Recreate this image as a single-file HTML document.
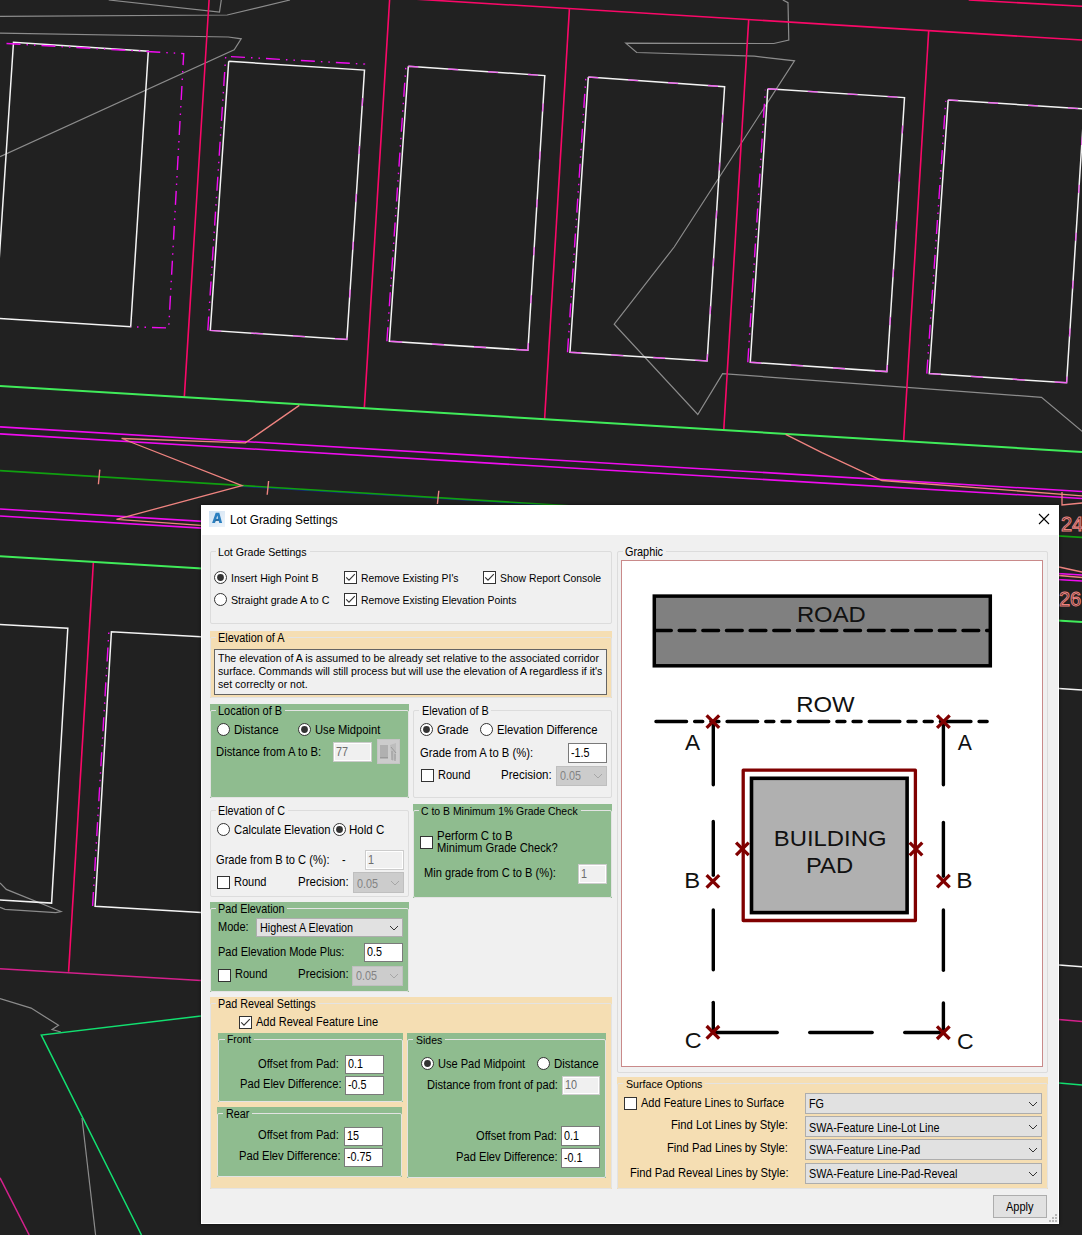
<!DOCTYPE html>
<html><head><meta charset="utf-8"><style>
html,body{margin:0;padding:0;}
body{width:1082px;height:1235px;overflow:hidden;position:relative;background:#212121;font-family:"Liberation Sans",sans-serif;}
.t{position:absolute;white-space:nowrap;}
.r{position:absolute;}
</style></head><body>
<svg class="r" style="left:0;top:0;z-index:0" width="1082" height="1235"><path d="M108.7 0 L219.5 12.2 L221.3 0" stroke="#8c8c8c" stroke-width="1.2" fill="none" /><path d="M0 16.3 L227.2 15 L290 0" stroke="#8c8c8c" stroke-width="1.2" fill="none" /><path d="M0 33.1 L228.3 37 L241.2 38.8 L234.2 49.7 L0 156.6" stroke="#8c8c8c" stroke-width="1.2" fill="none" /><path d="M782.8 0 L788 2.6 L788.8 40.1 L773.8 43.5 L625.8 43.2 L636.7 52.5 L754.3 56.2 L794.5 60.8 L674.2 247 L614.2 324.2 L697.8 414.5 L722.6 373.6 L1041.5 397.3 L1090 438" stroke="#8c8c8c" stroke-width="1.2" fill="none" /><path d="M0 883 L6.3 889.4 L61 911.5 L55.8 912.6 L5 909.4 L0 907.3" stroke="#8c8c8c" stroke-width="1.2" fill="none" /><path d="M0 998.5 L31.1 1008.1 L58.5 1025.3 L52.1 1029.6 L60.9 1032" stroke="#8c8c8c" stroke-width="1.2" fill="none" /><path d="M82 1118 L95.6 1235" stroke="#8c8c8c" stroke-width="1.2" fill="none" /><path d="M-4.7 318.2 L13.5 42.2 L148.3 51.2 L130.7 326.8 L-4.7 318.2" stroke="#f4f4f4" stroke-width="1.5" fill="none" /><path d="M228.7 61.3 L364.5 70.1 L346.9 339.4 L210.3 330.4 L228.7 61.3" stroke="#f4f4f4" stroke-width="1.5" fill="none" /><path d="M408.3 66.3 L544.8 75.6 L527.9 350.3 L389.4 341.2 L408.3 66.3" stroke="#f4f4f4" stroke-width="1.5" fill="none" /><path d="M588.3 77.1 L724.6 86.7 L707.1 360.9 L570 352.3 L588.3 77.1" stroke="#f4f4f4" stroke-width="1.5" fill="none" /><path d="M767.8 88.8 L904.5 97.6 L886.9 371.6 L750.3 362.2 L767.8 88.8" stroke="#f4f4f4" stroke-width="1.5" fill="none" /><path d="M948.2 99.9 L1084 109 L1066.6 382.8 L929.3 373.6 L948.2 99.9" stroke="#f4f4f4" stroke-width="1.5" fill="none" /><path d="M-4 624.3 L67.8 628.3 L51.6 903.1 L-4 899.7" stroke="#f4f4f4" stroke-width="1.5" fill="none" /><path d="M201 636.8 L111.4 631.7 L95.1 906.3 L201 912.6" stroke="#f4f4f4" stroke-width="1.5" fill="none" /><path d="M6.5 43.5 L183.7 53.6 L168.7 328 L130.7 326.8" stroke="#f00cf0" stroke-width="1.4" fill="none" stroke-dasharray="14 6 1.5 6 1.5 6"/><path d="M207.8 330.4 L225.7 56.3 L364.5 64.1 L364.5 70.1" stroke="#f00cf0" stroke-width="1.4" fill="none" stroke-dasharray="14 6 1.5 6 1.5 6"/><path d="M364.5 70.1 L346.9 339.4" stroke="#f00cf0" stroke-width="1.4" fill="none" stroke-dasharray="8 40" stroke-dashoffset="20" stroke-opacity="0.6"/><path d="M346.9 339.4 L210.3 330.4" stroke="#f00cf0" stroke-width="1.4" fill="none" stroke-dasharray="12 30" stroke-opacity="0.6"/><path d="M386.9 341.2 L405.8 67.3" stroke="#f00cf0" stroke-width="1.4" fill="none" stroke-dasharray="14 6 1.5 6 1.5 6"/><path d="M408.3 66.3 L544.8 75.6" stroke="#f00cf0" stroke-width="1.4" fill="none" stroke-dasharray="10 30" stroke-opacity="0.6"/><path d="M544.8 75.6 L527.9 350.3" stroke="#f00cf0" stroke-width="1.4" fill="none" stroke-dasharray="8 40" stroke-dashoffset="20" stroke-opacity="0.6"/><path d="M527.9 350.3 L389.4 341.2" stroke="#f00cf0" stroke-width="1.4" fill="none" stroke-dasharray="12 30" stroke-opacity="0.6"/><path d="M567.5 352.3 L585.8 78.1" stroke="#f00cf0" stroke-width="1.4" fill="none" stroke-dasharray="14 6 1.5 6 1.5 6"/><path d="M588.3 77.1 L724.6 86.7" stroke="#f00cf0" stroke-width="1.4" fill="none" stroke-dasharray="10 30" stroke-opacity="0.6"/><path d="M724.6 86.7 L707.1 360.9" stroke="#f00cf0" stroke-width="1.4" fill="none" stroke-dasharray="8 40" stroke-dashoffset="20" stroke-opacity="0.6"/><path d="M707.1 360.9 L570 352.3" stroke="#f00cf0" stroke-width="1.4" fill="none" stroke-dasharray="12 30" stroke-opacity="0.6"/><path d="M747.8 362.2 L765.3 89.8" stroke="#f00cf0" stroke-width="1.4" fill="none" stroke-dasharray="14 6 1.5 6 1.5 6"/><path d="M767.8 88.8 L904.5 97.6" stroke="#f00cf0" stroke-width="1.4" fill="none" stroke-dasharray="10 30" stroke-opacity="0.6"/><path d="M904.5 97.6 L886.9 371.6" stroke="#f00cf0" stroke-width="1.4" fill="none" stroke-dasharray="8 40" stroke-dashoffset="20" stroke-opacity="0.6"/><path d="M886.9 371.6 L750.3 362.2" stroke="#f00cf0" stroke-width="1.4" fill="none" stroke-dasharray="12 30" stroke-opacity="0.6"/><path d="M926.8 373.6 L945.7 100.9" stroke="#f00cf0" stroke-width="1.4" fill="none" stroke-dasharray="14 6 1.5 6 1.5 6"/><path d="M948.2 99.9 L1084 109" stroke="#f00cf0" stroke-width="1.4" fill="none" stroke-dasharray="10 30" stroke-opacity="0.6"/><path d="M1084 109 L1066.6 382.8" stroke="#f00cf0" stroke-width="1.4" fill="none" stroke-dasharray="8 40" stroke-dashoffset="20" stroke-opacity="0.6"/><path d="M1066.6 382.8 L929.3 373.6" stroke="#f00cf0" stroke-width="1.4" fill="none" stroke-dasharray="12 30" stroke-opacity="0.6"/><path d="M92.6 906 L108.9 631" stroke="#f00cf0" stroke-width="1.4" fill="none" stroke-dasharray="14 6 1.5 6 1.5 6"/><path d="M209.1 0 L184.3 397.1" stroke="#fa0868" stroke-width="1.6" fill="none" /><path d="M389.6 0 L364.3 408.5" stroke="#fa0868" stroke-width="1.6" fill="none" /><path d="M405 -1.5 L1082 40" stroke="#fa0868" stroke-width="1.6" fill="none" /><path d="M569.4 9.1 L544.6 419.1" stroke="#fa0868" stroke-width="1.6" fill="none" /><path d="M748.7 19.4 L723.7 430.8" stroke="#fa0868" stroke-width="1.6" fill="none" /><path d="M928.7 30.8 L903.6 441.4" stroke="#fa0868" stroke-width="1.6" fill="none" /><path d="M968.7 0 L1082 6.2" stroke="#fa0868" stroke-width="1.6" fill="none" /><path d="M93.4 562 L68.6 971.8" stroke="#fa0868" stroke-width="1.6" fill="none" /><path d="M0 968.7 L201 980.6" stroke="#d4208c" stroke-width="1.5" fill="none" /><path d="M0 386 L1082 452" stroke="#40ec5a" stroke-width="2" fill="none" /><path d="M0 556.3 L1082 622" stroke="#40ec5a" stroke-width="2" fill="none" /><path d="M242 486.5 L560 505.9" stroke="#102890" stroke-width="1.0" fill="none" /><path d="M0 470.6 L1082 537.4" stroke="#10a010" stroke-width="1.6" fill="none" /><path d="M0 426.9 L1082 491.5" stroke="#f00cf0" stroke-width="1.6" fill="none" /><path d="M0 433.9 L1082 498.5" stroke="#f00cf0" stroke-width="1.6" fill="none" /><path d="M0 509 L1082 575" stroke="#f00cf0" stroke-width="1.6" fill="none" /><path d="M0 516 L1082 581" stroke="#f00cf0" stroke-width="1.6" fill="none" /><path d="M299.3 405.4 L245.3 442.9 L121.6 438.5 L242 485.6 L116.5 519.4 L201 525.4" stroke="#f08480" stroke-width="1.3" fill="none" /><path d="M785.6 434.4 L821.9 452.6 L881.9 480.5 L1082 495.8" stroke="#f08480" stroke-width="1.3" fill="none" /><path d="M99.8 469.6 L98.39999999999999 484.3" stroke="#f08480" stroke-width="1.4" fill="none" /><path d="M268.59999999999997 481 L267.2 494.7" stroke="#f08480" stroke-width="1.4" fill="none" /><path d="M438.8 490.8 L437.40000000000003 504" stroke="#f08480" stroke-width="1.4" fill="none" /><path d="M201 1016 L41.3 1035.1 L141.5 1235" stroke="#12e070" stroke-width="1.5" fill="none" /><path d="M0 1177.8 L29.2 1235" stroke="#d4208c" stroke-width="1.5" fill="none" /><path d="M1059 688.5 L1082 690" stroke="#f4f4f4" stroke-width="1.5" fill="none" /><path d="M1059 965 L1082 966.8" stroke="#f4f4f4" stroke-width="1.5" fill="none" /><path d="M1059 1019.5 L1082 1021.5" stroke="#d4208c" stroke-width="1.5" fill="none" /><path d="M1059 1083 L1082 1085" stroke="#12e070" stroke-width="1.5" fill="none" /><path d="M1059 567 L1082 572" stroke="#f08480" stroke-width="1.3" fill="none" /><path d="M1059 575.5 L1082 577.5" stroke="#f08480" stroke-width="1.3" fill="none" /><path d="M1062 492 L1062 505 L1082 503" stroke="#f08480" stroke-width="1.3" fill="none" /><text x="1061" y="530.5" font-family="Liberation Sans" font-size="20" fill="none" stroke="#f08480" stroke-width="1">24</text><text x="1059" y="605.5" font-family="Liberation Sans" font-size="20" fill="none" stroke="#f08480" stroke-width="1">26</text></svg>
<div class="r" style="left:201px;top:505px;width:858px;height:719px;background:#fff;box-shadow:0 0 3px rgba(0,0,0,0.6);z-index:0"></div>
<div class="r" style="left:202px;top:535px;width:856px;height:688px;background:#f0f0f0;z-index:0"></div>
<svg class="r" style="left:209px;top:511px;z-index:2" width="16" height="16"><defs><linearGradient id="ig" x1="0" y1="0" x2="1" y2="1"><stop offset="0" stop-color="#cfe2f3"/><stop offset="1" stop-color="#eef4fa"/></linearGradient></defs><rect width="16" height="16" fill="url(#ig)"/><g transform="translate(0.9 0.2)"><path d="M2.2 11.8 L5.8 1.6 L9.4 1.6 L12.2 11.8 L9.4 11.8 L8.8 9.6 L5.8 9.6 L5 11.8 Z M6.3 7.6 L8.2 7.6 L7.5 4.4 Z" fill="#2a7fc0"/><path d="M5 11.8 L5.8 9.6 L8.8 9.6 L9.2 8.4 L5.6 8.6 Z" fill="#1d4f78" opacity="0.8"/></g></svg>
<div class="t" style="left:230px;top:512.00px;font-size:11.822px;line-height:16px;color:#000;z-index:2;transform:scaleY(1.033);transform-origin:0 12px">Lot Grading Settings</div>
<svg class="r" style="left:1038px;top:513px;z-index:2" width="12" height="12"><path d="M1 1 L11 11 M11 1 L1 11" stroke="#000" stroke-width="1.1"/></svg>
<div class="r" style="left:210px;top:551px;width:402px;height:73px;border:1px solid #dcdcdc;box-sizing:border-box;border-radius:2px;z-index:1"></div>
<div class="r" style="left:216.3px;top:551px;width:93.4px;height:1px;background:#f0f0f0;z-index:1"></div>
<div class="t" style="left:218px;top:544.00px;font-size:10.633px;line-height:16px;color:#000;z-index:2;transform:scaleY(1.053);transform-origin:0 12px">Lot Grade Settings</div>
<svg class="r" style="left:214px;top:571px;z-index:4" width="13" height="13"><circle cx="6.5" cy="6.5" r="6" fill="#fff" stroke="#333" stroke-width="1"/><circle cx="6.5" cy="6.5" r="3.4" fill="#333"/></svg>
<div class="t" style="left:231px;top:571.00px;font-size:10.497px;line-height:16px;color:#000;z-index:5;transform:scaleY(1.066);transform-origin:0 11px">Insert High Point B</div>
<svg class="r" style="left:214px;top:593px;z-index:4" width="13" height="13"><circle cx="6.5" cy="6.5" r="6" fill="#fff" stroke="#333" stroke-width="1"/></svg>
<div class="t" style="left:231px;top:592.00px;font-size:10.662px;line-height:16px;color:#000;z-index:5;transform:scaleY(1.050);transform-origin:0 12px">Straight grade A to C</div>
<svg class="r" style="left:344px;top:571px;z-index:4" width="13" height="13"><rect x="0.5" y="0.5" width="12" height="12" fill="#fff" stroke="#333" stroke-width="1"/><path d="M2.2 6.4 L5 9.2 L10.8 3.2" fill="none" stroke="#333" stroke-width="1.1"/></svg>
<div class="t" style="left:361px;top:571.00px;font-size:10.366px;line-height:16px;color:#000;z-index:5;transform:scaleY(1.080);transform-origin:0 11px">Remove Existing PI's</div>
<svg class="r" style="left:344px;top:593px;z-index:4" width="13" height="13"><rect x="0.5" y="0.5" width="12" height="12" fill="#fff" stroke="#333" stroke-width="1"/><path d="M2.2 6.4 L5 9.2 L10.8 3.2" fill="none" stroke="#333" stroke-width="1.1"/></svg>
<div class="t" style="left:361px;top:593.00px;font-size:10.408px;line-height:16px;color:#000;z-index:5;transform:scaleY(1.075);transform-origin:0 11px">Remove Existing Elevation Points</div>
<svg class="r" style="left:483px;top:571px;z-index:4" width="13" height="13"><rect x="0.5" y="0.5" width="12" height="12" fill="#fff" stroke="#333" stroke-width="1"/><path d="M2.2 6.4 L5 9.2 L10.8 3.2" fill="none" stroke="#333" stroke-width="1.1"/></svg>
<div class="t" style="left:500px;top:571.00px;font-size:10.405px;line-height:16px;color:#000;z-index:5;transform:scaleY(1.076);transform-origin:0 11px">Show Report Console</div>
<div class="r" style="left:210px;top:631px;width:402px;height:67px;background:#f5deb3;z-index:1"></div>
<div class="r" style="left:210px;top:637px;width:402px;height:61px;border:1px solid #e3e3e3;box-sizing:border-box;border-radius:2px;z-index:1"></div>
<div class="r" style="left:216.3px;top:637px;width:71.7px;height:1px;background:#f5deb3;z-index:1"></div>
<div class="t" style="left:218px;top:630.00px;font-size:10.896px;line-height:16px;color:#000;z-index:2;transform:scaleY(1.121);transform-origin:0 12px">Elevation of A</div>
<div class="r" style="left:214px;top:649px;width:393px;height:46px;background:#f0f0f0;border:1px solid #646464;box-sizing:border-box;z-index:3"></div>
<div class="t" style="left:218px;top:650.00px;font-size:10.605px;line-height:16px;color:#000;z-index:4;transform:scaleY(1.055);transform-origin:0 12px">The elevation of A is assumed to be already set relative to the associated corridor</div>
<div class="t" style="left:218px;top:663.00px;font-size:10.550px;line-height:16px;color:#000;z-index:4;transform:scaleY(1.061);transform-origin:0 12px">surface. Commands will still process but will use the elevation of A regardless if it's</div>
<div class="t" style="left:218px;top:676.00px;font-size:10.550px;line-height:16px;color:#000;z-index:4;transform:scaleY(1.061);transform-origin:0 12px">set correclty or not.</div>
<div class="r" style="left:210px;top:704px;width:199px;height:94px;background:#8fbc8f;z-index:1"></div>
<div class="r" style="left:210px;top:710px;width:199px;height:88px;border:1px solid #e3e3e3;box-sizing:border-box;border-radius:2px;z-index:1"></div>
<div class="r" style="left:216.3px;top:710px;width:68.7px;height:1px;background:#8fbc8f;z-index:1"></div>
<div class="t" style="left:218px;top:703.00px;font-size:10.995px;line-height:16px;color:#000;z-index:2;transform:scaleY(1.110);transform-origin:0 12px">Location of B</div>
<svg class="r" style="left:217px;top:723px;z-index:4" width="13" height="13"><circle cx="6.5" cy="6.5" r="6" fill="#fff" stroke="#333" stroke-width="1"/></svg>
<div class="t" style="left:234px;top:722.00px;font-size:11.501px;line-height:16px;color:#000;z-index:5;transform:scaleY(1.062);transform-origin:0 12px">Distance</div>
<svg class="r" style="left:298px;top:723px;z-index:4" width="13" height="13"><circle cx="6.5" cy="6.5" r="6" fill="#fff" stroke="#333" stroke-width="1"/><circle cx="6.5" cy="6.5" r="3.4" fill="#333"/></svg>
<div class="t" style="left:315px;top:722.00px;font-size:11.217px;line-height:16px;color:#000;z-index:5;transform:scaleY(1.088);transform-origin:0 12px">Use Midpoint</div>
<div class="t" style="left:216px;top:744.00px;font-size:11.271px;line-height:16px;color:#000;z-index:5;transform:scaleY(1.083);transform-origin:0 12px">Distance from A to B:</div>
<div class="r" style="left:333px;top:742px;width:39px;height:20px;background:#f0f0f0;border:1px solid #ccc;box-shadow:inset 0 0 0 1px #fff;box-sizing:border-box;z-index:4"></div>
<div class="t" style="left:336px;top:744.00px;font-size:10.800px;line-height:16px;color:#6d6d6d;z-index:5;transform:scaleY(1.130);transform-origin:0 12px">77</div>
<div class="r" style="left:377px;top:739px;width:23px;height:25px;background:#cccccc;border:1px solid #c4c4c4;box-sizing:border-box;z-index:4"></div>
<svg class="r" style="left:377px;top:739px;z-index:5" width="23" height="25"><rect x="3" y="6" width="8" height="13" fill="#b0b0b0"/><rect x="3" y="18" width="8" height="1.5" fill="#9a9a9a"/><path d="M13 6 L19 4 L19 20 L15 22 Z" fill="#bdbdbd"/><path d="M14 8 L19 14 M15 12 L15 21 M18 15 L18 22" stroke="#9a9a9a" stroke-width="1"/></svg>
<div class="r" style="left:413px;top:710px;width:199px;height:88px;border:1px solid #dcdcdc;box-sizing:border-box;border-radius:2px;z-index:1"></div>
<div class="r" style="left:419.4px;top:710px;width:71.4px;height:1px;background:#f0f0f0;z-index:1"></div>
<div class="t" style="left:422px;top:703.00px;font-size:10.837px;line-height:16px;color:#000;z-index:2;transform:scaleY(1.127);transform-origin:0 12px">Elevation of B</div>
<svg class="r" style="left:420px;top:723px;z-index:4" width="13" height="13"><circle cx="6.5" cy="6.5" r="6" fill="#fff" stroke="#333" stroke-width="1"/><circle cx="6.5" cy="6.5" r="3.4" fill="#333"/></svg>
<div class="t" style="left:437px;top:722.00px;font-size:11.359px;line-height:16px;color:#000;z-index:5;transform:scaleY(1.075);transform-origin:0 12px">Grade</div>
<svg class="r" style="left:480px;top:723px;z-index:4" width="13" height="13"><circle cx="6.5" cy="6.5" r="6" fill="#fff" stroke="#333" stroke-width="1"/></svg>
<div class="t" style="left:497px;top:722.00px;font-size:11.266px;line-height:16px;color:#000;z-index:5;transform:scaleY(1.084);transform-origin:0 12px">Elevation Difference</div>
<div class="t" style="left:420px;top:745.00px;font-size:11.240px;line-height:16px;color:#000;z-index:5;transform:scaleY(1.086);transform-origin:0 12px">Grade from A to B (%):</div>
<div class="r" style="left:568px;top:743px;width:39px;height:20px;background:#fff;border:1px solid #7a7a7a;box-sizing:border-box;z-index:4"></div>
<div class="t" style="left:571px;top:745.00px;font-size:10.800px;line-height:16px;color:#000;z-index:5;transform:scaleY(1.130);transform-origin:0 12px">-1.5</div>
<svg class="r" style="left:421px;top:769px;z-index:4" width="13" height="13"><rect x="0.5" y="0.5" width="12" height="12" fill="#fff" stroke="#333" stroke-width="1"/></svg>
<div class="t" style="left:438px;top:767.00px;font-size:11.036px;line-height:16px;color:#000;z-index:5;transform:scaleY(1.106);transform-origin:0 12px">Round</div>
<div class="t" style="left:501px;top:767.00px;font-size:11.571px;line-height:16px;color:#000;z-index:5;transform:scaleY(1.055);transform-origin:0 12px">Precision:</div>
<div class="r" style="left:556px;top:766px;width:51px;height:20px;background:#cccccc;border:1px solid #bfbfbf;box-sizing:border-box;z-index:4"></div>
<div class="t" style="left:560px;top:768.00px;font-size:10.800px;line-height:16px;color:#838383;z-index:5;transform:scaleY(1.130);transform-origin:0 12px">0.05</div>
<svg class="r" style="left:592.5px;top:772.0px;z-index:5" width="10" height="8"><path d="M1 2 L5 6 L9 2" fill="none" stroke="#a6a6a6" stroke-width="1"/></svg>
<div class="r" style="left:210px;top:810px;width:199px;height:87px;border:1px solid #dcdcdc;box-sizing:border-box;border-radius:2px;z-index:1"></div>
<div class="r" style="left:216.3px;top:810px;width:71.7px;height:1px;background:#f0f0f0;z-index:1"></div>
<div class="t" style="left:218px;top:803.00px;font-size:10.762px;line-height:16px;color:#000;z-index:2;transform:scaleY(1.135);transform-origin:0 12px">Elevation of C</div>
<svg class="r" style="left:217px;top:823px;z-index:4" width="13" height="13"><circle cx="6.5" cy="6.5" r="6" fill="#fff" stroke="#333" stroke-width="1"/></svg>
<div class="t" style="left:234px;top:822.00px;font-size:11.281px;line-height:16px;color:#000;z-index:5;transform:scaleY(1.082);transform-origin:0 12px">Calculate Elevation</div>
<svg class="r" style="left:333px;top:823px;z-index:4" width="13" height="13"><circle cx="6.5" cy="6.5" r="6" fill="#fff" stroke="#333" stroke-width="1"/><circle cx="6.5" cy="6.5" r="3.4" fill="#333"/></svg>
<div class="t" style="left:349px;top:822.00px;font-size:11.574px;line-height:16px;color:#000;z-index:5;transform:scaleY(1.055);transform-origin:0 12px">Hold C</div>
<div class="t" style="left:216px;top:852.00px;font-size:11.125px;line-height:16px;color:#000;z-index:5;transform:scaleY(1.097);transform-origin:0 12px">Grade from B to C (%):</div>
<div class="t" style="left:342px;top:852.00px;font-size:10.800px;line-height:16px;color:#000;z-index:5;transform:scaleY(1.130);transform-origin:0 12px">-</div>
<div class="r" style="left:365px;top:850px;width:39px;height:20px;background:#f0f0f0;border:1px solid #ccc;box-shadow:inset 0 0 0 1px #fff;box-sizing:border-box;z-index:4"></div>
<div class="t" style="left:368px;top:852.00px;font-size:10.800px;line-height:16px;color:#6d6d6d;z-index:5;transform:scaleY(1.130);transform-origin:0 12px">1</div>
<svg class="r" style="left:217px;top:876px;z-index:4" width="13" height="13"><rect x="0.5" y="0.5" width="12" height="12" fill="#fff" stroke="#333" stroke-width="1"/></svg>
<div class="t" style="left:234px;top:874.00px;font-size:11.036px;line-height:16px;color:#000;z-index:5;transform:scaleY(1.106);transform-origin:0 12px">Round</div>
<div class="t" style="left:298px;top:874.00px;font-size:11.571px;line-height:16px;color:#000;z-index:5;transform:scaleY(1.055);transform-origin:0 12px">Precision:</div>
<div class="r" style="left:353px;top:872px;width:51px;height:21px;background:#cccccc;border:1px solid #bfbfbf;box-sizing:border-box;z-index:4"></div>
<div class="t" style="left:357px;top:876.00px;font-size:10.800px;line-height:16px;color:#838383;z-index:5;transform:scaleY(1.130);transform-origin:0 12px">0.05</div>
<svg class="r" style="left:389.5px;top:878.5px;z-index:5" width="10" height="8"><path d="M1 2 L5 6 L9 2" fill="none" stroke="#a6a6a6" stroke-width="1"/></svg>
<div class="r" style="left:413px;top:804px;width:199px;height:94px;background:#8fbc8f;z-index:1"></div>
<div class="r" style="left:413px;top:810px;width:199px;height:88px;border:1px solid #e3e3e3;box-sizing:border-box;border-radius:2px;z-index:1"></div>
<div class="r" style="left:418.8px;top:810px;width:162.2px;height:1px;background:#8fbc8f;z-index:1"></div>
<div class="t" style="left:421px;top:804.00px;font-size:10.445px;line-height:16px;color:#000;z-index:2;transform:scaleY(1.072);transform-origin:0 11px">C to B Minimum 1% Grade Check</div>
<svg class="r" style="left:420px;top:836px;z-index:4" width="13" height="13"><rect x="0.5" y="0.5" width="12" height="12" fill="#fff" stroke="#333" stroke-width="1"/></svg>
<div class="t" style="left:437px;top:828.00px;font-size:11.455px;line-height:16px;color:#000;z-index:5;transform:scaleY(1.066);transform-origin:0 12px">Perform C to B</div>
<div class="t" style="left:437px;top:840.00px;font-size:11.198px;line-height:16px;color:#000;z-index:5;transform:scaleY(1.090);transform-origin:0 12px">Minimum Grade Check?</div>
<div class="t" style="left:424px;top:865.00px;font-size:11.101px;line-height:16px;color:#000;z-index:5;transform:scaleY(1.100);transform-origin:0 12px">Min grade from C to B (%):</div>
<div class="r" style="left:578px;top:864px;width:29px;height:20px;background:#f0f0f0;border:1px solid #ccc;box-shadow:inset 0 0 0 1px #fff;box-sizing:border-box;z-index:4"></div>
<div class="t" style="left:581px;top:866.00px;font-size:10.800px;line-height:16px;color:#6d6d6d;z-index:5;transform:scaleY(1.130);transform-origin:0 12px">1</div>
<div class="r" style="left:210px;top:902px;width:199px;height:90px;background:#8fbc8f;z-index:1"></div>
<div class="r" style="left:210px;top:908px;width:199px;height:84px;border:1px solid #e3e3e3;box-sizing:border-box;border-radius:2px;z-index:1"></div>
<div class="r" style="left:216.3px;top:908px;width:71.1px;height:1px;background:#8fbc8f;z-index:1"></div>
<div class="t" style="left:218px;top:901.00px;font-size:10.805px;line-height:16px;color:#000;z-index:2;transform:scaleY(1.130);transform-origin:0 12px">Pad Elevation</div>
<div class="t" style="left:218px;top:919.00px;font-size:11.007px;line-height:16px;color:#000;z-index:5;transform:scaleY(1.109);transform-origin:0 12px">Mode:</div>
<div class="r" style="left:256px;top:918px;width:147px;height:19px;background:#e1e1e1;border:1px solid #adadad;box-sizing:border-box;z-index:4"></div>
<div class="t" style="left:260px;top:920.00px;font-size:10.800px;line-height:16px;color:#000;z-index:5;transform:scaleY(1.130);transform-origin:0 12px">Highest A Elevation</div>
<svg class="r" style="left:388.5px;top:923.5px;z-index:5" width="10" height="8"><path d="M1 2 L5 6 L9 2" fill="none" stroke="#333" stroke-width="1"/></svg>
<div class="t" style="left:218px;top:944.00px;font-size:11.049px;line-height:16px;color:#000;z-index:5;transform:scaleY(1.105);transform-origin:0 12px">Pad Elevation Mode Plus:</div>
<div class="r" style="left:364px;top:943px;width:39px;height:19px;background:#fff;border:1px solid #7a7a7a;box-sizing:border-box;z-index:4"></div>
<div class="t" style="left:367px;top:944.00px;font-size:10.800px;line-height:16px;color:#000;z-index:5;transform:scaleY(1.130);transform-origin:0 12px">0.5</div>
<svg class="r" style="left:218px;top:969px;z-index:4" width="13" height="13"><rect x="0.5" y="0.5" width="12" height="12" fill="#fff" stroke="#333" stroke-width="1"/></svg>
<div class="t" style="left:235px;top:966.00px;font-size:11.036px;line-height:16px;color:#000;z-index:5;transform:scaleY(1.106);transform-origin:0 12px">Round</div>
<div class="t" style="left:298px;top:966.00px;font-size:11.571px;line-height:16px;color:#000;z-index:5;transform:scaleY(1.055);transform-origin:0 12px">Precision:</div>
<div class="r" style="left:352px;top:966px;width:51px;height:20px;background:#cccccc;border:1px solid #bfbfbf;box-sizing:border-box;z-index:4"></div>
<div class="t" style="left:356px;top:968.00px;font-size:10.800px;line-height:16px;color:#838383;z-index:5;transform:scaleY(1.130);transform-origin:0 12px">0.05</div>
<svg class="r" style="left:388.5px;top:972.0px;z-index:5" width="10" height="8"><path d="M1 2 L5 6 L9 2" fill="none" stroke="#a6a6a6" stroke-width="1"/></svg>
<div class="r" style="left:210px;top:997px;width:402px;height:192px;background:#f5deb3;z-index:1"></div>
<div class="r" style="left:210px;top:1003px;width:402px;height:186px;border:1px solid #e3e3e3;box-sizing:border-box;border-radius:2px;z-index:1"></div>
<div class="r" style="left:216.3px;top:1003px;width:102.6px;height:1px;background:#f5deb3;z-index:1"></div>
<div class="t" style="left:218px;top:996.00px;font-size:10.799px;line-height:16px;color:#000;z-index:2;transform:scaleY(1.131);transform-origin:0 12px">Pad Reveal Settings</div>
<svg class="r" style="left:239px;top:1016px;z-index:4" width="13" height="13"><rect x="0.5" y="0.5" width="12" height="12" fill="#fff" stroke="#333" stroke-width="1"/><path d="M2.2 6.4 L5 9.2 L10.8 3.2" fill="none" stroke="#333" stroke-width="1.1"/></svg>
<div class="t" style="left:256px;top:1014.00px;font-size:11.046px;line-height:16px;color:#000;z-index:5;transform:scaleY(1.105);transform-origin:0 12px">Add Reveal Feature Line</div>
<div class="r" style="left:218px;top:1033px;width:185px;height:69px;background:#8fbc8f;z-index:3"></div>
<div class="r" style="left:218px;top:1039px;width:185px;height:63px;border:1px solid #e3e3e3;box-sizing:border-box;border-radius:2px;z-index:3"></div>
<div class="r" style="left:224.5px;top:1039px;width:29.3px;height:1px;background:#8fbc8f;z-index:3"></div>
<div class="t" style="left:227px;top:1032.00px;font-size:10.390px;line-height:16px;color:#000;z-index:4;transform:scaleY(1.077);transform-origin:0 11px">Front</div>
<div class="t" style="left:258px;top:1056.00px;font-size:11.130px;line-height:16px;color:#000;z-index:5;transform:scaleY(1.097);transform-origin:0 12px">Offset from Pad:</div>
<div class="r" style="left:345px;top:1055px;width:39px;height:19px;background:#fff;border:1px solid #7a7a7a;box-sizing:border-box;z-index:4"></div>
<div class="t" style="left:348px;top:1056.00px;font-size:10.800px;line-height:16px;color:#000;z-index:5;transform:scaleY(1.130);transform-origin:0 12px">0.1</div>
<div class="t" style="left:240px;top:1076.00px;font-size:11.160px;line-height:16px;color:#000;z-index:5;transform:scaleY(1.094);transform-origin:0 12px">Pad Elev Difference:</div>
<div class="r" style="left:345px;top:1076px;width:39px;height:19px;background:#fff;border:1px solid #7a7a7a;box-sizing:border-box;z-index:4"></div>
<div class="t" style="left:348px;top:1077.00px;font-size:10.800px;line-height:16px;color:#000;z-index:5;transform:scaleY(1.130);transform-origin:0 12px">-0.5</div>
<div class="r" style="left:217px;top:1107px;width:185px;height:70px;background:#8fbc8f;z-index:3"></div>
<div class="r" style="left:217px;top:1113px;width:185px;height:64px;border:1px solid #e3e3e3;box-sizing:border-box;border-radius:2px;z-index:3"></div>
<div class="r" style="left:223.4px;top:1113px;width:28.4px;height:1px;background:#8fbc8f;z-index:3"></div>
<div class="t" style="left:226px;top:1106.00px;font-size:10.821px;line-height:16px;color:#000;z-index:4;transform:scaleY(1.128);transform-origin:0 12px">Rear</div>
<div class="t" style="left:258px;top:1127.00px;font-size:11.130px;line-height:16px;color:#000;z-index:5;transform:scaleY(1.097);transform-origin:0 12px">Offset from Pad:</div>
<div class="r" style="left:344px;top:1127px;width:39px;height:19px;background:#fff;border:1px solid #7a7a7a;box-sizing:border-box;z-index:4"></div>
<div class="t" style="left:347px;top:1128.00px;font-size:10.800px;line-height:16px;color:#000;z-index:5;transform:scaleY(1.130);transform-origin:0 12px">15</div>
<div class="t" style="left:239px;top:1148.00px;font-size:11.160px;line-height:16px;color:#000;z-index:5;transform:scaleY(1.094);transform-origin:0 12px">Pad Elev Difference:</div>
<div class="r" style="left:344px;top:1148px;width:39px;height:19px;background:#fff;border:1px solid #7a7a7a;box-sizing:border-box;z-index:4"></div>
<div class="t" style="left:347px;top:1149.00px;font-size:10.800px;line-height:16px;color:#000;z-index:5;transform:scaleY(1.130);transform-origin:0 12px">-0.75</div>
<div class="r" style="left:407px;top:1033px;width:199px;height:145px;background:#8fbc8f;z-index:3"></div>
<div class="r" style="left:407px;top:1039px;width:199px;height:139px;border:1px solid #e3e3e3;box-sizing:border-box;border-radius:2px;z-index:3"></div>
<div class="r" style="left:413.3px;top:1039px;width:31.4px;height:1px;background:#8fbc8f;z-index:3"></div>
<div class="t" style="left:416px;top:1033.00px;font-size:10.485px;line-height:16px;color:#000;z-index:4;transform:scaleY(1.067);transform-origin:0 11px">Sides</div>
<svg class="r" style="left:421px;top:1057px;z-index:4" width="13" height="13"><circle cx="6.5" cy="6.5" r="6" fill="#fff" stroke="#333" stroke-width="1"/><circle cx="6.5" cy="6.5" r="3.4" fill="#333"/></svg>
<div class="t" style="left:438px;top:1056.00px;font-size:11.066px;line-height:16px;color:#000;z-index:5;transform:scaleY(1.103);transform-origin:0 12px">Use Pad Midpoint</div>
<svg class="r" style="left:537px;top:1057px;z-index:4" width="13" height="13"><circle cx="6.5" cy="6.5" r="6" fill="#fff" stroke="#333" stroke-width="1"/></svg>
<div class="t" style="left:554px;top:1056.00px;font-size:11.501px;line-height:16px;color:#000;z-index:5;transform:scaleY(1.062);transform-origin:0 12px">Distance</div>
<div class="t" style="left:427px;top:1077.00px;font-size:11.120px;line-height:16px;color:#000;z-index:5;transform:scaleY(1.098);transform-origin:0 12px">Distance from front of pad:</div>
<div class="r" style="left:562px;top:1076px;width:38px;height:19px;background:#f0f0f0;border:1px solid #ccc;box-shadow:inset 0 0 0 1px #fff;box-sizing:border-box;z-index:4"></div>
<div class="t" style="left:565px;top:1077.00px;font-size:10.800px;line-height:16px;color:#6d6d6d;z-index:5;transform:scaleY(1.130);transform-origin:0 12px">10</div>
<div class="t" style="left:476px;top:1128.00px;font-size:11.130px;line-height:16px;color:#000;z-index:5;transform:scaleY(1.097);transform-origin:0 12px">Offset from Pad:</div>
<div class="r" style="left:561px;top:1126px;width:39px;height:20px;background:#fff;border:1px solid #7a7a7a;box-sizing:border-box;z-index:4"></div>
<div class="t" style="left:564px;top:1128.00px;font-size:10.800px;line-height:16px;color:#000;z-index:5;transform:scaleY(1.130);transform-origin:0 12px">0.1</div>
<div class="t" style="left:456px;top:1149.00px;font-size:11.160px;line-height:16px;color:#000;z-index:5;transform:scaleY(1.094);transform-origin:0 12px">Pad Elev Difference:</div>
<div class="r" style="left:561px;top:1148px;width:39px;height:20px;background:#fff;border:1px solid #7a7a7a;box-sizing:border-box;z-index:4"></div>
<div class="t" style="left:564px;top:1150.00px;font-size:10.800px;line-height:16px;color:#000;z-index:5;transform:scaleY(1.130);transform-origin:0 12px">-0.1</div>
<div class="r" style="left:617px;top:551px;width:431px;height:522px;border:1px solid #dcdcdc;box-sizing:border-box;border-radius:2px;z-index:1"></div>
<div class="r" style="left:623px;top:551px;width:43.2px;height:1px;background:#f0f0f0;z-index:1"></div>
<div class="t" style="left:625px;top:544.00px;font-size:10.861px;line-height:16px;color:#000;z-index:2;transform:scaleY(1.124);transform-origin:0 12px">Graphic</div>
<div class="r" style="left:621px;top:560px;width:422px;height:507px;background:#fff;border:1px solid #c98a8a;box-sizing:border-box;z-index:3"></div>
<div class="r" style="left:617px;top:1077px;width:431px;height:112px;background:#f5deb3;z-index:1"></div>
<div class="r" style="left:617px;top:1083px;width:431px;height:106px;border:1px solid #e3e3e3;box-sizing:border-box;border-radius:2px;z-index:1"></div>
<div class="r" style="left:623.3px;top:1083px;width:81.6px;height:1px;background:#f5deb3;z-index:1"></div>
<div class="t" style="left:626px;top:1076.00px;font-size:10.663px;line-height:16px;color:#000;z-index:2;transform:scaleY(1.050);transform-origin:0 12px">Surface Options</div>
<svg class="r" style="left:624px;top:1097px;z-index:4" width="13" height="13"><rect x="0.5" y="0.5" width="12" height="12" fill="#fff" stroke="#333" stroke-width="1"/></svg>
<div class="t" style="left:641px;top:1095.00px;font-size:11.016px;line-height:16px;color:#000;z-index:5;transform:scaleY(1.108);transform-origin:0 12px">Add Feature Lines to Surface</div>
<div class="t" style="left:671px;top:1117.00px;font-size:11.240px;line-height:16px;color:#000;z-index:5;transform:scaleY(1.086);transform-origin:0 12px">Find Lot Lines by Style:</div>
<div class="t" style="left:667px;top:1140.00px;font-size:11.216px;line-height:16px;color:#000;z-index:5;transform:scaleY(1.089);transform-origin:0 12px">Find Pad Lines by Style:</div>
<div class="t" style="left:630px;top:1165.00px;font-size:11.205px;line-height:16px;color:#000;z-index:5;transform:scaleY(1.090);transform-origin:0 12px">Find Pad Reveal Lines by Style:</div>
<div class="r" style="left:805px;top:1093px;width:237px;height:21px;background:#e1e1e1;border:1px solid #adadad;box-sizing:border-box;z-index:4"></div>
<div class="t" style="left:809px;top:1096.00px;font-size:10.800px;line-height:16px;color:#000;z-index:5;transform:scaleY(1.130);transform-origin:0 12px">FG</div>
<svg class="r" style="left:1027.5px;top:1099.5px;z-index:5" width="10" height="8"><path d="M1 2 L5 6 L9 2" fill="none" stroke="#333" stroke-width="1"/></svg>
<div class="r" style="left:805px;top:1116px;width:237px;height:21px;background:#e1e1e1;border:1px solid #adadad;box-sizing:border-box;z-index:4"></div>
<div class="t" style="left:809px;top:1120.00px;font-size:10.800px;line-height:16px;color:#000;z-index:5;transform:scaleY(1.130);transform-origin:0 12px">SWA-Feature Line-Lot Line</div>
<svg class="r" style="left:1027.5px;top:1122.5px;z-index:5" width="10" height="8"><path d="M1 2 L5 6 L9 2" fill="none" stroke="#333" stroke-width="1"/></svg>
<div class="r" style="left:805px;top:1139px;width:237px;height:21px;background:#e1e1e1;border:1px solid #adadad;box-sizing:border-box;z-index:4"></div>
<div class="t" style="left:809px;top:1142.00px;font-size:10.800px;line-height:16px;color:#000;z-index:5;transform:scaleY(1.130);transform-origin:0 12px">SWA-Feature Line-Pad</div>
<svg class="r" style="left:1027.5px;top:1145.5px;z-index:5" width="10" height="8"><path d="M1 2 L5 6 L9 2" fill="none" stroke="#333" stroke-width="1"/></svg>
<div class="r" style="left:805px;top:1163px;width:237px;height:21px;background:#e1e1e1;border:1px solid #adadad;box-sizing:border-box;z-index:4"></div>
<div class="t" style="left:809px;top:1166.00px;font-size:10.800px;line-height:16px;color:#000;z-index:5;transform:scaleY(1.130);transform-origin:0 12px">SWA-Feature Line-Pad-Reveal</div>
<svg class="r" style="left:1027.5px;top:1169.5px;z-index:5" width="10" height="8"><path d="M1 2 L5 6 L9 2" fill="none" stroke="#333" stroke-width="1"/></svg>
<div class="r" style="left:993px;top:1195px;width:54px;height:23px;background:#e1e1e1;border:1px solid #adadad;box-sizing:border-box;z-index:3"></div>
<div class="t" style="left:1006px;top:1199.00px;font-size:11.011px;line-height:16px;color:#000;z-index:4;transform:scaleY(1.109);transform-origin:0 12px">Apply</div>
<svg class="r" style="left:1048px;top:1213px;z-index:3" width="10" height="10"><g fill="#b8b8b8"><rect x="7" y="1" width="2" height="2"/><rect x="4" y="4" width="2" height="2"/><rect x="7" y="4" width="2" height="2"/><rect x="1" y="7" width="2" height="2"/><rect x="4" y="7" width="2" height="2"/><rect x="7" y="7" width="2" height="2"/></g></svg>
<svg class="r" style="left:0;top:0;z-index:4" width="1082" height="1235">
<g font-family="Liberation Sans" fill="#111">
<rect x="654.3" y="596.1" width="336" height="69.7" fill="#808080" stroke="#000" stroke-width="3.5"/>
<path d="M654 630.5 L990 630.5" stroke="#000" stroke-width="3.5" stroke-dasharray="15.7 7.95" stroke-dashoffset="22.1" stroke-linecap="round" fill="none"/>
<text x="796.93" y="621.6" font-size="21.5" textLength="68.78" lengthAdjust="spacingAndGlyphs">ROAD</text>
<text x="796.23" y="712" font-size="21.5" textLength="58.46" lengthAdjust="spacingAndGlyphs">ROW</text>
<path d="M656 721.6 L987.2 721.6" stroke="#000" stroke-width="3.5" stroke-dasharray="30.5 8.2 8 8.2 8 8.2" stroke-linecap="round" fill="none"/>
<g stroke="#000" stroke-width="3.4" stroke-linecap="round" fill="none">
<path d="M713.3 722.75 L713.3 784.75"/>
<path d="M713.3 821.55 L713.3 875.25"/>
<path d="M713.3 910.05 L713.3 969.75"/>
<path d="M713.3 1002.35 L713.3 1030.55"/>
<path d="M943.4 722.75 L943.4 784.85"/>
<path d="M943.4 822.45 L943.4 876.25"/>
<path d="M943.4 910.05 L943.4 970.35"/>
<path d="M943.4 1003.05 L943.4 1030.95"/>
<path d="M714.75 1032.5 L777.25 1032.5"/>
<path d="M809.75 1032.5 L872.15 1032.5"/>
<path d="M904.75 1032.5 L941.25 1032.5"/>
</g>
<rect x="743.2" y="770.2" width="172.2" height="150.3" fill="#fff" stroke="#800000" stroke-width="3.3" stroke-linejoin="round"/>
<rect x="751.5" y="778.3" width="155.6" height="134.3" fill="#b0b0b0" stroke="#000" stroke-width="3.6"/>
<text x="773.83" y="846.4" font-size="21.5" textLength="112.70" lengthAdjust="spacingAndGlyphs">BUILDING</text>
<text x="805.93" y="872.7" font-size="21.5" textLength="47.18" lengthAdjust="spacingAndGlyphs">PAD</text>
<path d="M706.6 715.3000000000001 L719.1999999999999 727.9 M719.1999999999999 715.3000000000001 L706.6 727.9" stroke="#800000" stroke-width="3.3"/>
<path d="M937.1 715.3000000000001 L949.6999999999999 727.9 M949.6999999999999 715.3000000000001 L937.1 727.9" stroke="#800000" stroke-width="3.3"/>
<path d="M736.1 842.6 L748.6999999999999 855.1999999999999 M748.6999999999999 842.6 L736.1 855.1999999999999" stroke="#800000" stroke-width="3.3"/>
<path d="M909.7 842.7 L922.3 855.3 M922.3 842.7 L909.7 855.3" stroke="#800000" stroke-width="3.3"/>
<path d="M706.6 875.1 L719.1999999999999 887.6999999999999 M719.1999999999999 875.1 L706.6 887.6999999999999" stroke="#800000" stroke-width="3.3"/>
<path d="M937.1 874.8000000000001 L949.6999999999999 887.4 M949.6999999999999 874.8000000000001 L937.1 887.4" stroke="#800000" stroke-width="3.3"/>
<path d="M706.6 1026.0 L719.1999999999999 1038.6 M719.1999999999999 1026.0 L706.6 1038.6" stroke="#800000" stroke-width="3.3"/>
<path d="M937.0 1026.4 L949.5999999999999 1039.0 M949.5999999999999 1026.4 L937.0 1039.0" stroke="#800000" stroke-width="3.3"/>
<text x="684.95" y="750.3" font-size="21.5" textLength="15.10" lengthAdjust="spacingAndGlyphs">A</text>
<text x="957.65" y="750.3" font-size="21.5" textLength="14.10" lengthAdjust="spacingAndGlyphs">A</text>
<text x="684.23" y="888.4" font-size="21.5" textLength="15.89" lengthAdjust="spacingAndGlyphs">B</text>
<text x="956.23" y="888.4" font-size="21.5" textLength="16.29" lengthAdjust="spacingAndGlyphs">B</text>
<text x="684.72" y="1048" font-size="21.5" textLength="16.87" lengthAdjust="spacingAndGlyphs">C</text>
<text x="956.92" y="1048.8" font-size="21.5" textLength="16.67" lengthAdjust="spacingAndGlyphs">C</text>
</g></svg>
</body></html>
